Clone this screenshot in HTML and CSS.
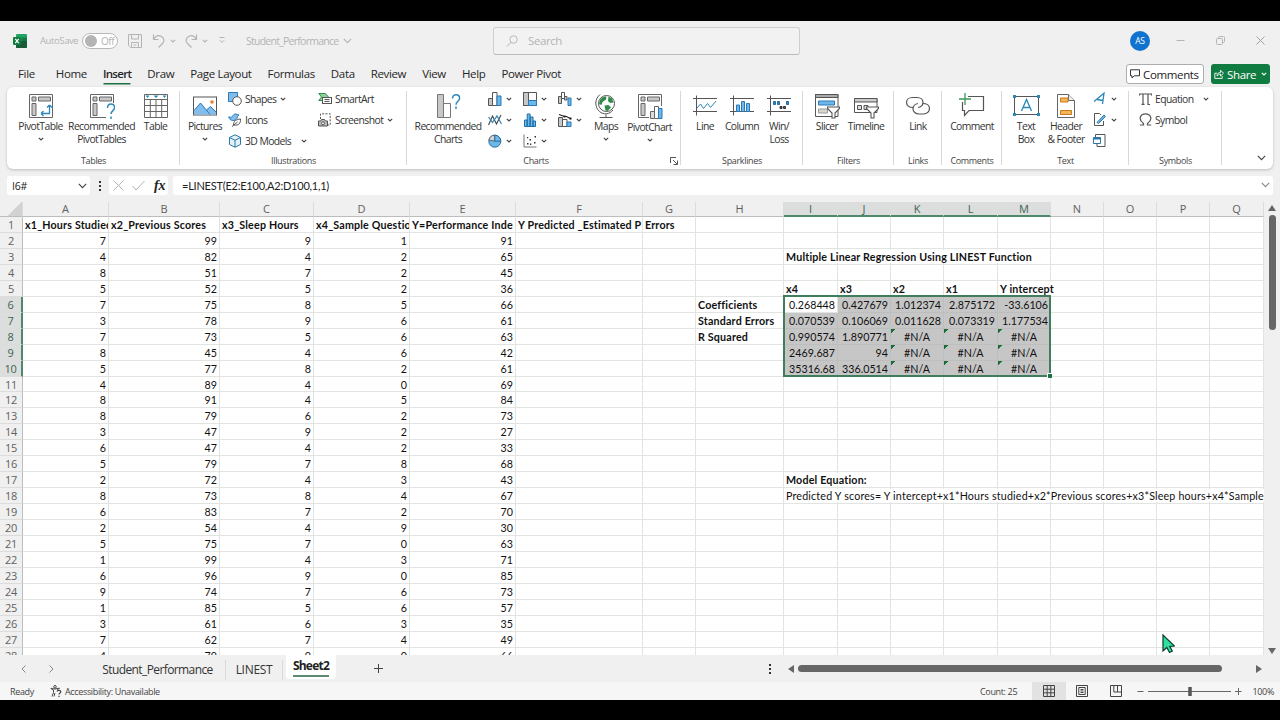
FILE: index.html
```html
<!DOCTYPE html>
<html lang="en">
<head>
    <meta charset="UTF-8">
    <meta name="viewport" content="width=device-width, initial-scale=1.0">
    <title>Student_Performance - Excel</title>
    <link rel="stylesheet" href="styles.css">
</head>
<body>
    <svg class="defs" width="0" height="0">
        <symbol id="chev" viewBox="0 0 6 4"><path d="M.8.8 3 3 5.200.8" fill="none" stroke="currentColor" stroke-width="1.1"/></symbol>
        <symbol id="chev-lg" viewBox="0 0 9 6"><path d="m.8.800 3.700 3.900L8.200.8" fill="none" stroke="currentColor" stroke-width="1.1"/></symbol>
        <symbol id="funnel" viewBox="0 0 14 13"><path d="M1 1h12v1.500L8.500 7v5h-3V7L1 2.500z" fill="#fff" stroke="#555" stroke-width="1.100"/></symbol>
    </svg>

    <div class="app">
        <header class="titlebar">
            <svg class="logo" width="14" height="14" viewBox="0 0 14 14">
                <rect x="3" y="0" width="11" height="14" rx="1" fill="#21a366"/>
                <path d="M3 7h11v6a1 1 0 0 1-1 1H4a1 1 0 0 1-1-1z" fill="#185c37"/>
                <rect x="8.500" y="3.500" width="5.500" height="3.500" fill="#107c41"/>
                <rect x="0" y="3" width="8" height="8" rx="1" fill="#107c41"/>
                <path d="M2.300 4.800 5.700 9.200M5.700 4.800 2.300 9.200" stroke="#fff" stroke-width="1.200"/>
            </svg>
            <span class="autosave">AutoSave</span>
            <span class="toggle"><i></i>Off</span>
            <svg class="save" width="14" height="14" viewBox="0 0 14 14" fill="none" stroke="#b4b4b4"><path d="M.5.5h13v13h-11l-2-2zM3.500.5v4.500h7V.5M3.500 13.500V8.500h7v5M5.500 11h3"/></svg>
            <svg class="undo" width="14" height="14" viewBox="0 0 14 14" fill="none" stroke="#b4b4b4" stroke-width="1.200"><path d="M1.500.5v5h5M1.700 5.300C4 1.500 7 1 9.500 2.500c3 2 3 5 1 7L6.500 13.500"/></svg>
            <svg class="chev faint" width="6" height="4"><use href="#chev"/></svg>
            <svg class="redo" width="14" height="14" viewBox="0 0 14 14" fill="none" stroke="#b4b4b4" stroke-width="1.200"><path d="M12.500.5v5h-5M12.300 5.300C10 1.500 7 1 4.500 2.500c-3 2-3 5-1 7L7.500 13.500"/></svg>
            <svg class="chev faint" width="6" height="4"><use href="#chev"/></svg>
            <svg class="more" width="6" height="7" viewBox="0 0 6 7" fill="none" stroke="#b4b4b4"><path d="M.5.5h5M.8 3.200 3 5.400 5.200 3.200"/></svg>
            <span class="filename">Student_Performance</span>
            <svg class="chev faint" width="9" height="6"><use href="#chev-lg"/></svg>
            <div class="search">
                <svg width="12" height="12" viewBox="0 0 12 12" fill="none" stroke="#b8b8b8"><circle cx="7.500" cy="4.500" r="3.700"/><path d="M5 7.500.6 11.600"/></svg>
                <span>Search</span>
            </div>
            <span class="avatar">AS</span>
            <svg class="win min" width="9" height="9" viewBox="0 0 9 9" fill="none" stroke="#b4b4b4"><path d="M.5 4.500h8"/></svg>
            <svg class="win max" width="9" height="9" viewBox="0 0 9 9" fill="none" stroke="#b4b4b4"><rect x=".5" y="2.500" width="6" height="6" rx="1"/><path d="M2.500 2V1.500a1 1 0 0 1 1-1h4a1 1 0 0 1 1 1v4a1 1 0 0 1-1 1H7"/></svg>
            <svg class="win" width="9" height="9" viewBox="0 0 9 9" fill="none" stroke="#a0a0a0"><path d="m.5.500 8 8M8.500.5l-8 8"/></svg>
        </header>

        <nav class="tabs">
            <span class="file">File</span>
            <span>Home</span>
            <span class="active">Insert</span>
            <span>Draw</span>
            <span>Page Layout</span>
            <span>Formulas</span>
            <span>Data</span>
            <span>Review</span>
            <span>View</span>
            <span>Help</span>
            <span>Power Pivot</span>
            <div class="tab-actions">
                <button class="btn-comments">
                    <svg width="10" height="10" viewBox="0 0 10 10" fill="none" stroke="#333"><path d="M.5.8h9v6H4.200L2 9V6.800H.5z"/></svg>
                    Comments
                </button>
                <button class="btn-share">
                    <svg width="10" height="10" viewBox="0 0 10 10" fill="none" stroke="#fff" stroke-width=".9"><path d="M3 4.200H.8v5.200h7.400V7M3 7c.2-2.500 1.500-3.500 3.500-3.500V1.200l3 3-3 2.800V5.200C5 5.200 4 5.700 3 7z"/></svg>
                    Share
                    <svg class="chev" width="6" height="4"><use href="#chev"/></svg>
                </button>
            </div>
        </nav>

        <section class="ribbon">
            <div class="group g-tables">
                <div class="group-body">
                    <div class="big" style="width:49px">
                        <svg width="26" height="26" viewBox="0 0 26 26" fill="none" stroke="#666"><path d="M1.500 1.500h23v23h-23z" fill="#fff"/><path d="M4 4h4v4H4zM10.500 4h12v4h-12zM4 10.500h4v12H4z" fill="#c8c8c8"/><path d="M13 20.500h8.500v-8M13 20.500l2.500-2.500M13 20.500l2.500 2.500M21.500 12l-2.500 2.500M21.500 12l2.500 2.500" stroke="#2b88b8" stroke-width="1.300"/></svg>
                        <span>PivotTable</span>
                        <svg class="chev" width="6" height="4"><use href="#chev"/></svg>
                    </div>
                    <div class="big" style="width:73px">
                        <svg width="26" height="26" viewBox="0 0 26 26" fill="none" stroke="#666"><path d="M17 24.500H1.500v-23h23V10" fill="#fff"/><path d="M4 4h4v4H4zM10.500 4h12v4h-12zM4 10.500h4v12H4z" fill="#c8c8c8"/><path d="M18.500 15c0-3 1.500-4 3.500-4s3.600 1.400 3.600 3.500c0 3-3.600 3.200-3.600 6.500M22 23.500V26" stroke="#2b88b8" stroke-width="1.500"/></svg>
                        <span>Recommended<br>PivotTables</span>
                    </div>
                    <div class="big" style="width:35px">
                        <svg width="26" height="26" viewBox="0 0 26 26" fill="none" stroke="#666"><path d="M1.500 1.500h23v23h-23z" fill="#fff"/><path d="M1.500 6.500h23" /><path d="M1.500 12.500h23M1.500 18.500h23M7.300 6v18.500M13 6v18.500M18.700 6v18.500"/><path d="M2.500 2.500h4L4.500 5zM10.500 2.500h5L13 5zM19.500 2.500h4L21.500 5z" fill="#2b88b8" stroke="none"/></svg>
                        <span>Table</span>
                    </div>
                </div>
                <div class="group-label">Tables</div>
            </div>

            <div class="group g-illus">
                <div class="group-body">
                    <div class="big" style="width:34px">
                        <svg width="26" height="26" viewBox="0 0 26 26"><rect x="1.500" y="4" width="23" height="18" fill="#fff" stroke="#555"/><path d="M2 17.500 8.500 10l6 7 4-3.500 5.500 5.500v2.500H2z" fill="#83bdec"/><path d="M2 17.500 8.500 10l9.500 11.500M14.500 17l4-3.500 5.500 5.500" fill="none" stroke="#2b78b8"/><circle cx="20" cy="9" r="1.800" fill="#e8822c"/></svg>
                        <span>Pictures</span>
                        <svg class="chev" width="6" height="4"><use href="#chev"/></svg>
                    </div>
                    <div class="stack s-illus1">
                        <div class="small"><svg width="14" height="14" viewBox="0 0 14 14"><path d="M.5.5h9v9h-9z" fill="#83bdec" stroke="#2b78b8"/><circle cx="9" cy="9" r="4.300" fill="#fff" stroke="#555"/></svg><span>Shapes</span><svg class="chev" width="6" height="4"><use href="#chev"/></svg></div>
                        <div class="small"><svg width="14" height="14" viewBox="0 0 14 14"><path d="M.8 3.800c2 1 3.500.5 4.200-1.300C6 .8 8 .5 9 1.500l2 .5-1.500 1.500C9.500 6 7 8 4.500 7.500 2.500 7 1 6 .8 3.800z" fill="#83bdec" stroke="#2b78b8"/><path d="M5.500 12C5.500 8 8 6.500 12.500 6c.3 4-1.500 7-7 6zm-1.500 1.500L9.500 9" fill="#fff" stroke="#555"/></svg><span>Icons</span></div>
                        <div class="small"><svg width="14" height="14" viewBox="0 0 14 14" fill="none" stroke="#2b78a8"><path d="M7 .8 12.500 3.500v7L7 13.200 1.500 10.500v-7z" fill="#e4f1fa"/><path d="M1.500 3.500 7 6.300l5.500-2.800M7 6.300v7"/></svg><span>3D Models</span><svg class="chev wide" width="6" height="4"><use href="#chev"/></svg></div>
                    </div>
                    <div class="stack">
                        <div class="small"><svg width="14" height="14" viewBox="0 0 14 14"><path d="M.8 1.500h6.500L10.500 5 7 8.500H.8L3.500 5z" fill="#8fd19e" stroke="#2e8b4a"/><rect x="4.500" y="5.500" width="9" height="6" fill="#fff" stroke="#555"/><path d="M6.500 7.500h5M6.500 9.500h5" stroke="#555"/></svg><span>SmartArt</span></div>
                        <div class="small"><svg width="14" height="14" viewBox="0 0 14 14" fill="none" stroke="#555"><path d="M2.500 6V.8h9.700V12H10" stroke-dasharray="2 1.400"/><path d="M.5 8h2l1-1.500h3L7.500 8h2v5h-9z" fill="#bbb"/><circle cx="5" cy="10.300" r="1.500" fill="#fff"/></svg><span>Screenshot</span><svg class="chev" width="6" height="4"><use href="#chev"/></svg></div>
                    </div>
                </div>
                <div class="group-label">Illustrations</div>
            </div>

            <div class="group g-charts">
                <div class="group-body">
                    <div class="big" style="width:70px">
                        <svg width="26" height="26" viewBox="0 0 26 26" fill="none"><path d="M2.500 1.500h6v23h-6z" fill="#c8c8c8" stroke="#777"/><path d="M8.500 10.500h7v14h-7z" fill="#fff" stroke="#777"/><path d="M17.500 5.500C17.500 3 19 1.800 21 1.800s3.600 1.300 3.600 3.400c0 3-3.600 3.200-3.600 6.500M21 13.500V16" stroke="#2b88b8" stroke-width="1.500"/></svg>
                        <span>Recommended<br>Charts</span>
                    </div>
                    <div class="icon-grid">
                        <div><svg width="14" height="14" viewBox="0 0 14 14" stroke="#555"><path d="M.5 6.500h4v7h-4z" fill="#c8c8c8"/><path d="M4.500.5h4.500v13H4.500z" fill="#fff"/><path d="M9 4h4v9.500H9z" fill="#6cb8ea" stroke="#2b78b8"/></svg><svg class="chev" width="6" height="4"><use href="#chev"/></svg></div>
                        <div><svg width="14" height="14" viewBox="0 0 14 14" stroke="#555" fill="#fff"><path d="M.5.5h13v13H.5z"/><path d="M.5.5h5v13h-5z" fill="#c8c8c8"/><path d="M5.500 8.500h8v5h-8z" fill="#6cb8ea" stroke="#2b78b8"/></svg><svg class="chev" width="6" height="4"><use href="#chev"/></svg></div>
                        <div><svg width="14" height="14" viewBox="0 0 14 14" stroke="#555"><path d="M.5 4.500h3v7h-3z" fill="#c8c8c8"/><path d="M3.500.5h3v6h-3z" fill="#fff"/><path d="M6.500 4.500H9V8H6.500z" fill="#c8c8c8"/><path d="M10 6h3v7.500h-3z" fill="#6cb8ea" stroke="#2b78b8"/></svg><svg class="chev" width="6" height="4"><use href="#chev"/></svg></div>
                        <div><svg width="14" height="14" viewBox="0 0 14 14" fill="none"><path d="M.5 12 4.500 3l4 8 4.500-9" stroke="#444" stroke-width="1.100"/><path d="M.5 4 4.500 9.500 9 3l4.500 8" stroke="#2b88b8" stroke-width="1.200"/></svg><svg class="chev" width="6" height="4"><use href="#chev"/></svg></div>
                        <div><svg width="14" height="14" viewBox="0 0 14 14" fill="#6cb8ea" stroke="#1f6fa8"><path d="M1.500 7h2.700v6.500H1.500zM4.200 1h2.900v12.500H4.200zM7.100 4H10v9.500H7.100zM10 8h2.500v5.500H10z"/></svg><svg class="chev" width="6" height="4"><use href="#chev"/></svg></div>
                        <div><svg width="14" height="14" viewBox="0 0 14 14" stroke="#555"><path d="M.5 4.500h4v9h-4z" fill="#c8c8c8"/><path d="M4.500 6.500h4.500v7H4.500z" fill="#fff"/><path d="M9 9h4v4.500H9z" fill="#6cb8ea" stroke="#2b78b8"/><path d="m1 1.500 5.500 2h2l4.500 2.500" fill="none" stroke="#222" stroke-width="1.200"/><path d="M5.500 2.500h2v2h-2zM11.500 4.500h2v2h-2z" fill="#222" stroke="none"/></svg><svg class="chev" width="6" height="4"><use href="#chev"/></svg></div>
                        <div><svg width="14" height="14" viewBox="0 0 14 14"><circle cx="6.800" cy="7.200" r="6" fill="#6cb8ea" stroke="#2b6fa0"/><path d="M6.800 7.200V1.200A6 6 0 0 0 1 6z" fill="#d4d4d4" stroke="#666"/><path d="M6.800 7.200V1.200a6 6 0 0 1 6 6z" fill="#6cb8ea" stroke="#2b6fa0"/></svg><svg class="chev" width="6" height="4"><use href="#chev"/></svg></div>
                        <div><svg width="14" height="14" viewBox="0 0 14 14"><path d="M1 .5v12.500h12.500" fill="none" stroke="#777"/><path d="M4 9h1.500v1.500H4zM6.500 5H8v1.500H6.500zM7 9.500h1.300V11H7zM11.500 2H13v1.500h-1.500zM11 8h1.500v1.500H11zM4 3h1.200v1.200H4z" fill="#333"/></svg><svg class="chev" width="6" height="4"><use href="#chev"/></svg></div>
                    </div>
                    <div class="big" style="width:40px">
                        <svg width="26" height="26" viewBox="0 0 26 26" fill="none" stroke="#555"><circle cx="13.500" cy="10.500" r="8" fill="#fff"/><path d="M7 7c2-3 4.500-4 6.500-3.500l-.5 3L9.500 9l-1 3L6 11zM15.500 3.500l3.500 2 1.500 4-3.500.5-2-2zM11.500 12.500l4-.5 2.500 2.500-3.500 3.500-2-.5z" fill="#2e8b4a" stroke="none"/><path d="M7 1.500C1.500 6 1.500 14 6.500 18.500c4 3.500 10 3 13.500-1.500M13 21.500v3M6.500 24.500h13"/></svg>
                        <span>Maps</span>
                        <svg class="chev" width="6" height="4"><use href="#chev"/></svg>
                    </div>
                    <div class="big" style="width:47px">
                        <svg width="26" height="26" viewBox="0 0 26 26" fill="none" stroke="#666"><path d="M12 24.500H1.500v-23h23V13" fill="#fff"/><path d="M4 4h4v4H4zM10.500 4h12v4h-12zM4 10.500h4v12H4z" fill="#c8c8c8"/><path d="M13.500 18.500h4v7h-4z" fill="#ddd"/><path d="M17.500 13.500h4v12h-4z" fill="#fff"/><path d="M21.500 15.500H25v10h-3.500z" fill="#6cb8ea" stroke="#2b78b8"/></svg>
                        <span class="lower">PivotChart</span>
                        <svg class="chev" width="6" height="4"><use href="#chev"/></svg>
                    </div>
                </div>
                <div class="group-label">Charts</div>
                <svg class="launcher" width="8" height="8" viewBox="0 0 8 8" fill="none" stroke="#555"><path d="M.5 6V.5H6M3 3l4 4M7.500 3.500v4h-4"/></svg>
            </div>

            <div class="group g-spark">
                <div class="group-body">
                    <div class="big" style="width:34px">
                        <svg width="26" height="26" viewBox="0 0 26 26" fill="none" stroke="#555"><path d="M1 5.500h24M1 18.500h24M4.500 2.500v20"/><path d="m5 15 3.500-4 3 4.500 4-5 3 4 5.500-6.500" stroke="#2b88b8"/></svg>
                        <span>Line</span>
                    </div>
                    <div class="big" style="width:40px">
                        <svg width="26" height="26" viewBox="0 0 26 26" fill="none" stroke="#555"><path d="M1 5.500h24M1 18.500h24M4.500 2.500v20"/><path d="M7.500 12h3v6.500h-3zM12.500 8.500h3v10h-3zM17.500 10.500h3v8h-3z" fill="#6cb8ea" stroke="#2b78b8"/></svg>
                        <span>Column</span>
                    </div>
                    <div class="big" style="width:34px">
                        <svg width="26" height="26" viewBox="0 0 26 26" fill="none" stroke="#555"><path d="M1 5.500h24M1 18.500h24M4.500 2.500v20"/><path d="M7.500 8.500h2v3h-2zM11.500 8.500h2v3h-2zM20.500 8.500h2v3h-2z" fill="#2b88b8" stroke="#2b68a0"/><path d="M14 13.500h2v2h-2zM17.500 13.500h2v2h-2z" fill="#555" stroke="#333"/></svg>
                        <span>Win/<br>Loss</span>
                    </div>
                </div>
                <div class="group-label">Sparklines</div>
            </div>

            <div class="group g-filters">
                <div class="group-body">
                    <div class="big" style="width:34px">
                        <svg width="26" height="26" viewBox="0 0 26 26" fill="none" stroke="#555"><path d="M1.500 1.500h22.500v22H1.500z" fill="#fff"/><path d="M1.500 1.500h22.500v3H1.500z" fill="#aaa"/><path d="M4.500 8h16v4h-16z" fill="#6cb8ea" stroke="#2b78b8"/><path d="M4.500 16h9v4h-9z" fill="#d9d5cf" stroke="#999"/><use href="#funnel" x="12.500" y="13" width="14" height="13"/></svg>
                        <span>Slicer</span>
                    </div>
                    <div class="big" style="width:44px">
                        <svg width="26" height="26" viewBox="0 0 26 26" fill="none" stroke="#555"><path d="M1.500 5.500h22.500v14H1.500z" fill="#fff"/><path d="M1.500 5.500h22.500v3.500H1.500z" fill="#ccc"/><path d="M4.500 12.500h4v4h-4zM11 12.500h4v4h-4z" fill="#ddd"/><use href="#funnel" x="12.500" y="13" width="14" height="13"/></svg>
                        <span>Timeline</span>
                    </div>
                </div>
                <div class="group-label">Filters</div>
            </div>

            <div class="group g-links">
                <div class="group-body">
                    <div class="big" style="width:34px">
                        <svg width="26" height="26" viewBox="0 0 26 26" fill="none" stroke="#555" stroke-width="1.200"><path d="M8 14.500C4 14.500 1.500 12.500 1.500 9.500s2.500-5 6-5h4.500c4 0 6 2.500 6 5s-2 5-5 5"/><path d="M17.500 10.500c4.500 0 7 2 7 5s-2.500 5.500-6 5.500h-4.500c-3.500 0-6-2.500-6-5s2-5 5-5.500"/></svg>
                        <span>Link</span>
                    </div>
                </div>
                <div class="group-label">Links</div>
            </div>

            <div class="group g-comments">
                <div class="group-body">
                    <div class="big" style="width:50px">
                        <svg width="26" height="26" viewBox="0 0 26 26" fill="none" stroke="#555" stroke-width="1.200"><path d="M9 3.500h15.500v14H10l-4.500 5v-5h-2V9"/><path d="M6 0v12M0 6h12" stroke="#3a9a5b" stroke-width="1.300"/></svg>
                        <span>Comment</span>
                    </div>
                </div>
                <div class="group-label">Comments</div>
            </div>

            <div class="group g-text">
                <div class="group-body">
                    <div class="big" style="width:36px">
                        <svg width="28" height="26" viewBox="0 0 28 26" fill="none"><path d="M2.500 3.500h24v18h-24z" stroke="#555"/><path d="M1 2h3v3H1zM25 2h3v3h-3zM1 20h3v3H1zM25 20h3v3h-3z" fill="#2b88b8"/><path d="M9.500 18 14.500 6.500l5 11.500M11 14.500h7" stroke="#2b88b8" stroke-width="1.300"/></svg>
                        <span>Text<br>Box</span>
                    </div>
                    <div class="big" style="width:44px">
                        <svg width="26" height="26" viewBox="0 0 26 26"><path d="M4.500 1.500h11l6 6v17h-17z" fill="#fff" stroke="#666"/><path d="M15.500 1.500v6h6" fill="#eee" stroke="#666"/><path d="M7.500 5h7.500v4H7.500zM7.500 17.500h11v4h-11z" fill="#f5b65a" stroke="#c87a1e"/></svg>
                        <span>Header<br>&amp; Footer</span>
                    </div>
                    <div class="icon-col">
                        <div><svg width="13" height="13" viewBox="0 0 13 13" fill="none" stroke="#2b88b8" stroke-width="1.300"><path d="M1 9.500 11 1.200 9.500 12M4 7.500l6 1"/></svg><svg class="chev" width="6" height="4"><use href="#chev"/></svg></div>
                        <div><svg width="13" height="13" viewBox="0 0 13 13" fill="none" stroke="#555"><path d="M10.500 8v4.500h-9V.5h5L8 2"/><path d="m4 9.500 7-7.500 1.500 1.500-7 7z" fill="#6cb8ea" stroke="#2b78a8"/></svg><svg class="chev" width="6" height="4"><use href="#chev"/></svg></div>
                        <div><svg width="13" height="13" viewBox="0 0 13 13" fill="none" stroke="#555"><path d="M2.500 3V.5h9.500v12H4V10"/><path d="M.5 3.500h7v6h-7z" fill="#fff" stroke="#2b78a8"/><path d="M.5 4.500h7" stroke="#2b78a8" stroke-width="2"/></svg></div>
                    </div>
                </div>
                <div class="group-label">Text</div>
            </div>

            <div class="group g-symbols">
                <div class="group-body">
                    <div class="stack">
                        <div class="small"><svg width="13" height="12" viewBox="0 0 13 12" fill="none" stroke="#555" stroke-width="1.200"><path d="M.5 2.500V1h12v1.500M4 1v10.500M2.500 11.300H5.500M9 1v10.500h2"/></svg><span>Equation</span><svg class="chev eq" width="6" height="4"><use href="#chev"/></svg></div>
                        <div class="small"><svg width="13" height="13" viewBox="0 0 13 13" fill="none" stroke="#555" stroke-width="1.200"><path d="M.8 12h3.700v-1.500C-1.500 6 1.500.8 6.500.8s8 5.200 2 9.700V12h3.700"/></svg><span>Symbol</span></div>
                    </div>
                </div>
                <div class="group-label">Symbols</div>
            </div>
            <svg class="chev collapse" width="9" height="6"><use href="#chev-lg"/></svg>
        </section>

        <section class="formula-row">
            <div class="name-box"><span>I6#</span><svg class="chev" width="9" height="6"><use href="#chev-lg"/></svg></div>
            <div class="dots"><i></i><i></i><i></i></div>
            <div class="fx-box">
                <svg width="11" height="11" viewBox="0 0 11 11" fill="none" stroke="#b4b4b4"><path d="m.5.500 10 10M10.500.5l-10 10"/></svg>
                <svg width="13" height="11" viewBox="0 0 13 11" fill="none" stroke="#b4b4b4"><path d="m.5 6 3.500 4L12.500 1"/></svg>
                <b>fx</b>
            </div>
            <div class="formula"><span>=LINEST(E2:E100,A2:D100,1,1)</span><svg class="chev" width="9" height="6"><use href="#chev-lg"/></svg></div>
        </section>

        <main class="sheet-area">
            <div class="sheet" id="sheet"></div>
            <div class="vscroll"><i class="up"></i><div class="thumb"></div><i class="down"></i></div>
            <svg class="cursor" width="13" height="20" viewBox="0 0 13 20"><path d="M1 1v16l3.800-3.500 2.700 5 2.800-1.500-2.500-4.500 4.700-.5z" fill="#2fe0a0" stroke="#0a3a28" stroke-width="1.200"/></svg>
        </main>

        <footer>
            <div class="sheet-tabs">
                <svg class="prev" width="5" height="8" viewBox="0 0 5 8" fill="none" stroke="#888"><path d="M4.500.5 1 4l3.500 3.500"/></svg>
                <svg class="next" width="5" height="8" viewBox="0 0 5 8" fill="none" stroke="#888"><path d="M.5.5 4 4 .5 7.500"/></svg>
                <span class="tab t1">Student_Performance</span>
                <span class="tab t2">LINEST</span>
                <span class="tab current"><b>Sheet2</b></span>
                <svg class="add" width="9" height="9" viewBox="0 0 9 9" stroke="#444"><path d="M4.500 0v9M0 4.500h9"/></svg>
                <div class="dots"><i></i><i></i><i></i></div>
                <div class="hscroll"><i class="left"></i><div class="thumb"></div><i class="right"></i></div>
            </div>
            <div class="status">
                <span class="ready">Ready</span>
                <svg class="acc" width="12" height="12" viewBox="0 0 12 12" fill="none" stroke="#444"><circle cx="5" cy="1.800" r="1.300"/><path d="M.8 3.500 3.500 5v2.500L2 11.500M9.500 3.500 7 4.500M5 8l-1 3.500M.8 3.500C2 3 3.500 4 5 4s3-1 4.500-.8"/><path d="M7 6.500c.3-1.500 3.800-1.500 3.800.3 0 1.400-1.800 1.400-1.800 2.700M9 10.800V12" stroke-width="1.200"/></svg>
                <span class="acc-text">Accessibility: Unavailable</span>
                <span class="count">Count: 25</span>
                <div class="view on"><svg width="12" height="12" viewBox="0 0 12 12" fill="none" stroke="#444"><path d="M.5.5h11v11H.5zM.5 4.200h11M.5 7.800h11M4.200.5v11M7.800.5v11"/></svg></div>
                <div class="view"><svg width="12" height="12" viewBox="0 0 12 12" fill="none" stroke="#444"><path d="M.5.5h11v11H.5zM2.800 2.500h6.400v7H2.800zM4.500 4.500h3M4.500 6h3M4.500 7.500h3"/></svg></div>
                <div class="view"><svg width="12" height="12" viewBox="0 0 12 12" fill="none" stroke="#444"><path d="M.5.5h11v11H.5zM3.800.5v6.500h7.700M7.500.5V7"/></svg></div>
                <svg class="zoom" width="105" height="10" viewBox="0 0 105 10" fill="none" stroke="#666"><path d="M.5 5.500h6M98 5.500h6.500M101.500 2v7M11 5.500h83"/><path d="M53 1v9" stroke="#555" stroke-width="3.500"/></svg>
                <span class="pct">100%</span>
            </div>
        </footer>
    </div>
    <script src="script.js"></script>
</body>
</html>
```

FILE: styles.css
```css
* {
    box-sizing: border-box;
}
body {
    margin: 0;
    height: 720px;
    padding: 21px 0 20px;
    background: #000;
    overflow: hidden;
    font-family: "Open Sans", "Noto Sans", sans-serif;
    font-size: 11px;
    letter-spacing: -0.2px;
    color: #333;
}
svg {
    display: block;
    flex: none;
}
.defs {
    position: absolute;
}
.app {
    height: 679px;
    background: #f0f0f0;
    display: flex;
    flex-direction: column;
    overflow: hidden;
}
.chev {
    color: #444;
}
.faint {
    color: #b4b4b4;
}

/* title bar */
.titlebar {
    height: 40px;
    display: flex;
    align-items: center;
    padding-left: 13px;
    padding-bottom: 1px;
    color: #b4b4b4;
    flex: none;
}
.autosave {
    margin-left: 13px;
    width: 38px;
    font-size: 9.5px;
    letter-spacing: -0.4px;
}
.toggle {
    width: 36px;
    height: 16px;
    margin-left: 4px;
    border: 1px solid #b8b8b8;
    border-radius: 8px;
    background: #fff;
    display: flex;
    align-items: center;
    font-size: 10px;
    letter-spacing: -0.5px;
    padding-left: 2px;
}
.toggle i {
    width: 12px;
    height: 12px;
    border-radius: 50%;
    background: #b4b4b4;
    margin-right: 4px;
}
.save {
    margin-left: 10px;
}
.undo {
    margin: 0 4px 0 10px;
}
.redo {
    margin: 0 4px 0 8px;
}
.more {
    margin-left: 11px;
}
.filename {
    margin-left: 21px;
    width: 95px;
    margin-right: 2px;
    font-size: 10.5px;
    letter-spacing: -0.75px;
}
.search {
    width: 307px;
    height: 28px;
    margin-left: 141px;
    border: 1px solid #cfcfcf;
    border-bottom-color: #bbb;
    border-radius: 3px;
    display: flex;
    align-items: center;
    padding-left: 12px;
    gap: 10px;
    font-size: 11.5px;
    letter-spacing: -0.4px;
    background: #f2f2f2;
}
.avatar {
    margin-left: 330px;
    width: 20px;
    height: 20px;
    border-radius: 50%;
    background: #0f73cf;
    color: #fff;
    font-size: 8.5px;
    line-height: 20px;
    text-align: center;
}
.win {
    margin-left: 31px;
}
.win.min {
    margin-left: 26px;
}

/* ribbon tabs */
.tabs {
    height: 26px;
    display: flex;
    align-items: center;
    padding-left: 18px;
    gap: 16px;
    font-size: 11.5px;
    letter-spacing: -0.35px;
    color: #262626;
    flex: none;
}
.tabs span {
    line-height: 18px;
    white-space: nowrap;
}
.tabs .file {
    margin-right: 5px;
}
.tabs .active {
    font-weight: 600;
    letter-spacing: -0.7px;
    box-shadow: 0 2px 0 -0.5px #1e7145;
}
.tab-actions {
    margin-left: auto;
    padding-right: 10px;
    display: flex;
    gap: 7px;
}
.tab-actions button {
    height: 20px;
    border-radius: 3px;
    display: flex;
    align-items: center;
    gap: 3px;
    padding: 0 3px;
    font: 11.5px "Open Sans", sans-serif;
    letter-spacing: -0.35px;
}
.btn-comments {
    width: 78px;
    background: #fff;
    border: 1px solid #adadad;
    color: #222;
}
.btn-share {
    width: 59px;
    background: #107c41;
    border: none;
    color: #fff;
}
.btn-share .chev {
    color: #fff;
    margin-left: 2px;
}

/* ribbon */
.ribbon {
    height: 82px;
    margin: 0 7px;
    background: #fff;
    border-radius: 6px;
    box-shadow: 0 1px 3px rgba(0, 0, 0, 0.22);
    display: flex;
    flex: none;
    font-size: 10.4px;
    letter-spacing: -0.6px;
}
.group {
    position: relative;
    display: flex;
    flex-direction: column;
    flex: none;
}
.group::after {
    content: "";
    position: absolute;
    right: 0;
    top: 4px;
    bottom: 4px;
    width: 1px;
    background: #d8d8d8;
}
.group-body {
    display: flex;
    height: 68px;
}
.group-label {
    text-align: center;
    font-size: 9px;
    letter-spacing: -0.35px;
    line-height: 12px;
    color: #444;
}
.g-tables { width: 173px; }
.g-tables .group-body { padding-left: 9px; }
.g-illus { width: 227px; }
.g-illus .group-body { padding-left: 8px; }
.g-charts { width: 274px; }
.g-charts .group-body { padding-left: 6px; }
.g-charts .group-label { padding-right: 16px; }
.g-spark { width: 122px; }
.g-spark .group-body { padding-left: 7px; }
.g-filters { width: 91px; }
.g-filters .group-body { padding-left: 7px; }
.g-links { width: 48px; }
.g-links .group-body { padding-left: 7px; }
.g-comments { width: 60px; }
.g-comments .group-body { padding-left: 5px; }
.g-text { width: 127px; }
.g-text .group-body { padding-left: 6px; }
.g-symbols { width: 93px; }
.g-symbols .group-body { padding-left: 10px; }

.big {
    flex: none;
    display: flex;
    flex-direction: column;
    align-items: center;
    padding-top: 6px;
}
.big span {
    margin-top: 1px;
    line-height: 13.3px;
    text-align: center;
    white-space: nowrap;
}
.big .lower {
    margin-top: 2px;
}
.big .chev {
    margin-top: 4px;
}
.stack {
    padding-top: 1px;
}
.s-illus1 {
    width: 90px;
    margin-left: 6px;
    flex: none;
}
.small {
    height: 21.2px;
    display: flex;
    align-items: center;
    white-space: nowrap;
}
.small span {
    margin-left: 3px;
    margin-right: 4px;
}
.small .wide {
    margin-left: 6px;
}
.small .eq {
    margin-left: 6px;
}
.icon-grid {
    width: 98px;
    margin-left: 5px;
    padding-top: 1px;
    display: grid;
    grid-template-columns: 35px 35px 28px;
    grid-auto-rows: 21.2px;
}
.icon-grid div, .icon-col div {
    display: flex;
    align-items: center;
    gap: 4px;
}
.icon-col {
    padding: 1px 0 0 5px;
}
.icon-col div {
    height: 21.2px;
    gap: 5px;
}
.launcher {
    position: absolute;
    right: 3px;
    bottom: 4px;
}
.collapse {
    margin: 68px 0 0 35px;
}

/* formula bar */
.formula-row {
    height: 33px;
    padding: 7px 7px 0;
    display: flex;
    flex: none;
    font-size: 11px;
    color: #222;
}
.formula-row > div {
    height: 19px;
    display: flex;
    align-items: center;
    border-radius: 3px;
}
.name-box {
    width: 83px;
    background: #fff;
    justify-content: space-between;
    padding: 0 3px 0 5px;
    font-size: 10.5px;
}
.formula-row .dots {
    margin: 0 8px;
}
.dots {
    display: flex;
    flex-direction: column;
    justify-content: center;
    gap: 2px;
    width: 3px;
}
.dots i {
    width: 2px;
    height: 2px;
    background: #333;
}
.fx-box {
    width: 59px;
    background: #fff;
    padding-left: 4px;
    gap: 8px;
}
.fx-box b {
    font: italic bold 14px "Liberation Serif", serif;
    margin-left: 1px;
}
.formula {
    flex: 1;
    margin-left: 5px;
    background: #fff;
    padding: 0 3px 1px 9px;
    justify-content: space-between;
    font-family: Lato, sans-serif;
    letter-spacing: -0.23px;
}
.formula .chev {
    color: #888;
}

/* worksheet */
.sheet-area {
    position: relative;
    height: 453px;
    display: flex;
    flex: none;
}
.sheet {
    position: relative;
    width: 1264px;
    height: 453px;
    overflow: hidden;
    background: #fff;
    font-family: Lato, Carlito, sans-serif;
    font-size: 10.7px;
    letter-spacing: 0;
    color: #111;
}
.row {
    display: flex;
    height: 15.963px;
}
.row.head {
    height: 15px;
}
.cell {
    flex: none;
    border-right: 1px solid #e1e4e1;
    border-bottom: 1px solid #e1e4e1;
    padding: 0 2px;
    line-height: 16px;
    white-space: nowrap;
    overflow: hidden;
}
.num {
    text-align: right;
}
.mid {
    text-align: center;
}
.text {
    letter-spacing: 0.18px;
}
.bold {
    font-weight: bold;
}
.spill {
    overflow: visible;
    position: relative;
    z-index: 1;
}
.spill span {
    background: #fff;
}
.colhead, .rowhead {
    background: #f0f0f0;
    font-family: "Open Sans", sans-serif;
    color: #616161;
    text-align: center;
    border-color: #dcdcdc;
    padding: 0;
}
.colhead {
    font-size: 11px;
    line-height: 14px;
    border-bottom-color: #bdbdbd;
}
.rowhead {
    font-size: 11px;
    letter-spacing: -0.4px;
    border-right-color: #bdbdbd;
}
.colhead.on {
    background: #dcdedd;
    color: #3c6350;
    border-bottom: 2px solid #4c8a6b;
}
.rowhead.on {
    background: #dcdedd;
    color: #3c6350;
    border-right: 2px solid #4c8a6b;
}
.corner {
    background: linear-gradient(135deg, #f0f0f0 60%, #d2d2d2 60%);
}
.sel {
    background: #c6c6c6;
    border-color: #bcbfbd;
}
.err {
    background: linear-gradient(135deg, #1d6b38 3.500px, transparent 3.500px) #c6c6c6;
}
.selection {
    position: absolute;
    z-index: 2;
    border: 2px solid #3f7d5d;
}
.selection::after {
    content: "";
    position: absolute;
    right: -3px;
    bottom: -3px;
    width: 4px;
    height: 4px;
    background: #1e7145;
    box-shadow: -1px -1px 0 #fff;
}
.vscroll {
    width: 16px;
    padding: 3px 4px 1px;
    display: flex;
    flex-direction: column;
    align-items: center;
}
.vscroll .thumb {
    width: 7px;
    height: 115px;
    margin-top: 4px;
    border-radius: 4px;
    background: #666;
}
.up, .down {
    border: 4px solid transparent;
    border-top: none;
    border-bottom: 6px solid #666;
}
.down {
    margin-top: auto;
    border-top: 6px solid #666;
    border-bottom: none;
}
.cursor {
    position: absolute;
    left: 1162px;
    top: 432px;
    z-index: 3;
}

/* sheet tabs and status bar */
.sheet-tabs {
    height: 27px;
    display: flex;
    align-items: center;
    padding-left: 21px;
    font-size: 12px;
    letter-spacing: -0.6px;
    color: #333;
}
.next {
    margin-left: 23px;
}
.tab {
    height: 20px;
    line-height: 20px;
    text-align: center;
    border-right: 1px solid #dadada;
    margin-top: 2px;
}
.t1 {
    width: 136px;
    margin-left: 36px;
}
.t2 {
    width: 57px;
    letter-spacing: -0.3px;
}
.current {
    width: 50px;
    height: 24px;
    margin: -3px 0 0 3px;
    background: #fff;
    border-radius: 0 0 4px 4px;
    border: none;
}
.current b {
    display: inline-block;
    line-height: 21px;
    height: 22px;
    border-bottom: 2px solid #5d8a72;
    letter-spacing: -0.75px;
    color: #222;
}
.add {
    margin-left: 38px;
}
.sheet-tabs .dots {
    margin-left: 386px;
}
.hscroll {
    margin-left: 16px;
    width: 474px;
    display: flex;
    align-items: center;
}
.hscroll .thumb {
    width: 424px;
    height: 7px;
    margin-left: 4px;
    border-radius: 4px;
    background: #666;
}
.left, .right {
    border: 4px solid transparent;
    border-left: none;
    border-right: 6px solid #666;
}
.right {
    margin-left: auto;
    border-left: 6px solid #666;
    border-right: none;
}
.status {
    height: 18px;
    background: #f6f6f6;
    display: flex;
    align-items: center;
    padding-left: 10px;
    font-size: 9px;
    letter-spacing: -0.35px;
    color: #444;
}
.ready {
    width: 40px;
}
.acc-text {
    margin-left: 3px;
    width: 915px;
}
.count {
    width: 52px;
}
.view {
    width: 33.5px;
    height: 18px;
    display: flex;
    align-items: center;
    justify-content: center;
}
.view.on {
    background: #e2e2e2;
}
.zoom {
    margin-left: 4px;
}
.pct {
    margin-left: 11px;
}
```

FILE: script.js
```javascript
// column letter -> right edge in px (row header ends at 23)
var cols = 'ABCDEFGHIJKLMNOPQ'.split('');
var edges = [23, 109, 220, 314, 410, 516, 643, 696, 784, 838, 891, 944, 998, 1051, 1104, 1157, 1210, 1264];

var scores = [
    [7, 99, 9, 1, 91], [4, 82, 4, 2, 65], [8, 51, 7, 2, 45], [5, 52, 5, 2, 36],
    [7, 75, 8, 5, 66], [3, 78, 9, 6, 61], [7, 73, 5, 6, 63], [8, 45, 4, 6, 42],
    [5, 77, 8, 2, 61], [4, 89, 4, 0, 69], [8, 91, 4, 5, 84], [8, 79, 6, 2, 73],
    [3, 47, 9, 2, 27], [6, 47, 4, 2, 33], [5, 79, 7, 8, 68], [2, 72, 4, 3, 43],
    [8, 73, 8, 4, 67], [6, 83, 7, 2, 70], [2, 54, 4, 9, 30], [5, 75, 7, 0, 63],
    [1, 99, 4, 3, 71], [6, 96, 9, 0, 85], [9, 74, 7, 6, 73], [1, 85, 5, 6, 57],
    [3, 61, 6, 3, 35], [7, 62, 7, 4, 49], [4, 79, 9, 0, 66]
];

var labels = {
    A1: 'x1_Hours Studied', B1: 'x2_Previous Scores', C1: 'x3_Sleep Hours', D1: 'x4_Sample Questio',
    E1: 'Y=Performance Inde', F1: 'Y Predicted _Estimated P', G1: 'Errors',
    I3: 'Multiple Linear Regression Using LINEST Function',
    I5: 'x4', J5: 'x3', K5: 'x2', L5: 'x1', M5: 'Y intercept',
    H6: 'Coefficients', H7: 'Standard Errors', H8: 'R Squared',
    I17: 'Model Equation:',
    I18: 'Predicted Y scores= Y intercept+x1*Hours studied+x2*Previous scores+x3*Sleep hours+x4*Sample'
};
var spills = ['I3', 'M5', 'I17', 'I18'];

var linest = [
    ['0.268448', '0.427679', '1.012374', '2.875172', '-33.6106'],
    ['0.070539', '0.106069', '0.011628', '0.073319', '1.177534'],
    ['0.990574', '1.890771', '#N/A', '#N/A', '#N/A'],
    ['2469.687', '94', '#N/A', '#N/A', '#N/A'],
    ['35316.68', '336.0514', '#N/A', '#N/A', '#N/A']
];

function cell(text, cls, width) {
    return '<div class="cell ' + cls + '" style="width:' + width + 'px"><span>' + text + '</span></div>';
}

var html = '<div class="row head">' + cell('', 'colhead corner', edges[0]);
cols.forEach(function (c, i) {
    html += cell(c, 'colhead' + (i >= 8 && i <= 12 ? ' on' : ''), edges[i + 1] - edges[i]);
});
html += '</div>';

for (var r = 1; r <= 28; r++) {
    html += '<div class="row">' + cell(r, 'rowhead' + (r >= 6 && r <= 10 ? ' on' : ''), edges[0]);
    for (var i = 0; i < cols.length; i++) {
        var id = cols[i] + r;
        var text = '';
        var cls = '';
        if (labels[id]) {
            text = labels[id];
            cls = id === 'I18' ? 'text' : 'text bold';
            if (spills.indexOf(id) >= 0) cls += ' spill';
        } else if (i < 5 && r > 1) {
            text = scores[r - 2][i];
            cls = 'num';
        } else if (i >= 8 && i <= 12 && r >= 6 && r <= 10) {
            text = linest[r - 6][i - 8];
            cls = text === '#N/A' ? 'mid sel err' : 'num sel';
            if (id === 'I6') cls = 'num';
        }
        html += cell(text, cls, edges[i + 1] - edges[i]);
    }
    html += '</div>';
}

// outline around I6:M10
html += '<div class="selection" style="left:783px;top:93px;width:268px;height:82px"></div>';
document.getElementById('sheet').innerHTML = html;
```
